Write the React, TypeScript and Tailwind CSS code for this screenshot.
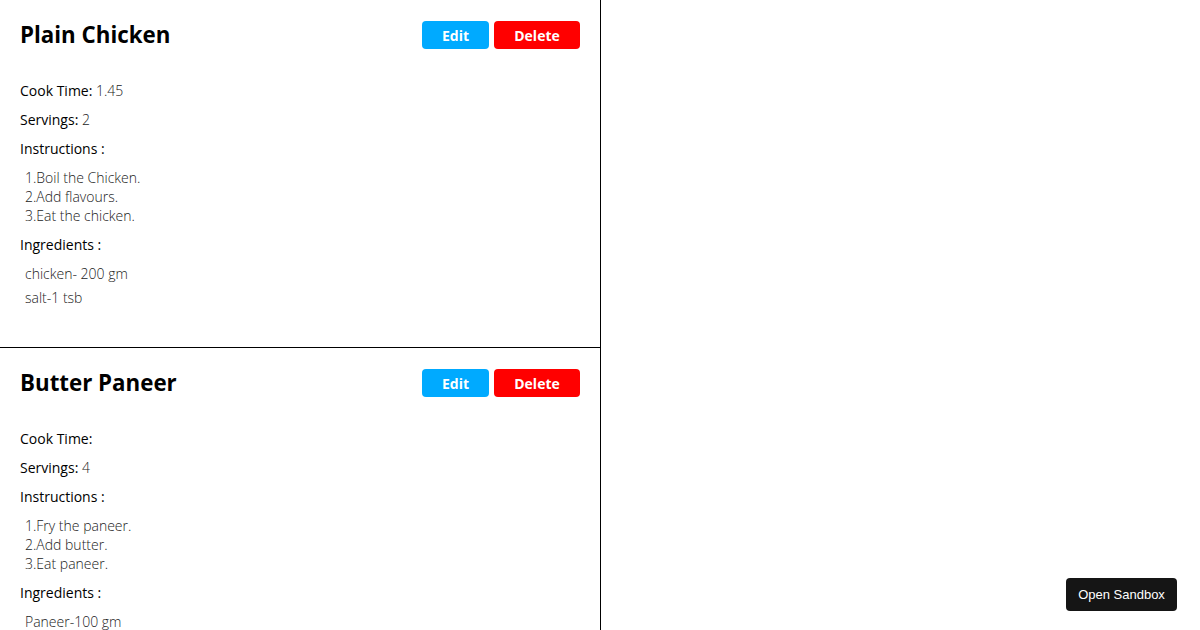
import React from 'react';

const recipes = [
  {
    title: 'Plain Chicken',
    cookTime: '1.45',
    servings: '2',
    instructions: ['1.Boil the Chicken.', '2.Add flavours.', '3.Eat the chicken.'],
    ingredients: ['chicken- 200 gm', 'salt-1 tsb'],
  },
  {
    title: 'Butter Paneer',
    cookTime: '',
    servings: '4',
    instructions: ['1.Fry the paneer.', '2.Add butter.', '3.Eat paneer.'],
    ingredients: ['Paneer-100 gm', 'Butter-50 gm'],
  },
];

type Recipe = (typeof recipes)[number];

function RecipeCard({ recipe }: { recipe: Recipe }) {
  return (
    <div className="border-r border-b border-black px-5 pt-5 pb-[37px]">
      {/* Header */}
      <div className="flex h-[30px] items-center justify-between">
        <h2 className="pb-px text-[22.3px] font-bold leading-[28px] text-black">{recipe.title}</h2>
        <div className="flex gap-[5px]">
          <button className="h-7 w-[67px] rounded bg-[#00aaff] text-[14px] font-bold text-white">Edit</button>
          <button className="h-7 w-[86px] rounded bg-[#ff0000] text-[14px] font-bold text-white">Delete</button>
        </div>
      </div>

      <div className="mt-[31px] text-[14px] leading-5 text-black">
        <div className="mb-[9px]">
          Cook Time: <span className="font-light text-[#222]">{recipe.cookTime}</span>
        </div>
        <div className="mb-[9px]">
          Servings: <span className="font-light text-[#222]">{recipe.servings}</span>
        </div>
        <div>Instructions :</div>
        <div className="mt-[9px] pl-[5px] font-light leading-[19px] text-[#222]">
          {recipe.instructions.map((step) => (
            <div key={step}>{step}</div>
          ))}
        </div>
        <div className="mt-[10px]">Ingredients :</div>
        <div className="mt-[7px] pl-[5px] font-light leading-6 text-[#222]">
          {recipe.ingredients.map((item) => (
            <div key={item}>{item}</div>
          ))}
        </div>
      </div>
    </div>
  );
}

export default function App() {
  return (
    <div className="relative h-[630px] w-[1200px] overflow-hidden bg-white font-['Open_Sans',sans-serif]">
      <div className="w-[601px]">
        {recipes.map((r) => (
          <RecipeCard key={r.title} recipe={r} />
        ))}
      </div>

      {/* Sandbox button overlay */}
      <button className="absolute right-[23px] bottom-[19px] h-[33px] w-[111px] rounded bg-[#151515] font-['Liberation_Sans',Arial,sans-serif] text-[13px] text-white">
        Open Sandbox
      </button>
    </div>
  );
}
